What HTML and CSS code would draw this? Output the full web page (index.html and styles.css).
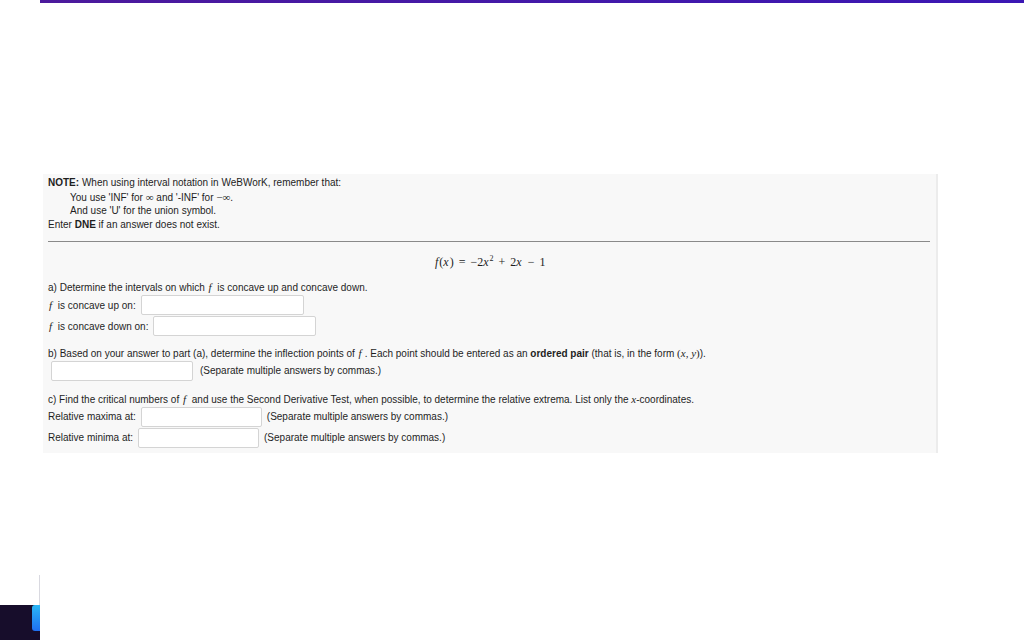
FILE: index.html
```html
<!DOCTYPE html>
<html>
<head>
<meta charset="utf-8">
<link rel="stylesheet" href="styles.css">
</head>
<body>
<div class="topbar"></div>
<div class="panel">
  <div class="note">
    <div class="line"><b>NOTE:</b> When using interval notation in WeBWorK, remember that:</div>
    <div class="line indent">You use 'INF' for <span class="m">∞</span> and '-INF' for <span class="m">−∞</span>.</div>
    <div class="line indent">And use 'U' for the union symbol.</div>
    <div class="line">Enter <b>DNE</b> if an answer does not exist.</div>
  </div>
  <hr class="rule">
  <div class="formula"><span class="mi">f</span>(<span class="mi">x</span>)<span class="op">=</span>−2<span class="mi">x</span><sup>2</sup><span class="op">+</span>2<span class="mi">x</span><span class="op">−</span>1</div>

  <div class="section sec-a">
    <div class="line">a) Determine the intervals on which <span class="mi sp">f</span> is concave up and concave down.</div>
    <div class="row"><span><span class="mi sp">f</span> is concave up on:</span><span class="box w162"></span></div>
    <div class="row"><span><span class="mi sp">f</span> is concave down on:</span><span class="box w162"></span></div>
  </div>

  <div class="section sec-b">
    <div class="line">b) Based on your answer to part (a), determine the inflection points of <span class="mi sp">f</span>. Each point should be entered as an <b>ordered pair</b> (that is, in the form <span class="m">(<span class="mi">x</span>, <span class="mi">y</span>)</span>).</div>
    <div class="row"><span class="box w141 first"></span><span>(Separate multiple answers by commas.)</span></div>
  </div>

  <div class="section sec-c">
    <div class="line">c) Find the critical numbers of <span class="mi sp">f</span> and use the Second Derivative Test, when possible, to determine the relative extrema. List only the <span class="mi">x</span>-coordinates.</div>
    <div class="row"><span>Relative maxima at:</span><span class="box w120"></span><span>(Separate multiple answers by commas.)</span></div>
    <div class="row"><span>Relative minima at:</span><span class="box w120"></span><span>(Separate multiple answers by commas.)</span></div>
  </div>
</div>
<div class="dock">
  <div class="dock-icon"></div>
</div>
</body>
</html>
```

FILE: styles.css
```css
html, body {
  margin: 0;
  padding: 0;
  background: #ffffff;
}
body {
  width: 1024px;
  height: 640px;
  overflow: hidden;
  position: relative;
  font-family: "Liberation Sans", Arial, Helvetica, sans-serif;
  font-size: 10px;
  color: #1e1e1e;
}
.topbar {
  margin-left: 40px;
  height: 3px;
  background: linear-gradient(90deg, #4c1a9c, #3b17b4);
}
.panel {
  margin: 171px 0 0 43px;
  width: 888px;
  height: 277px;
  padding: 2px 0 0 5px;
  background: #f8f8f8;
  border-right: 2px solid #ececec;
}
.line {
  height: 14px;
  line-height: 14px;
  white-space: nowrap;
}
.indent {
  padding-left: 22px;
}
.m, .formula {
  font-family: "Liberation Serif", "Times New Roman", serif;
}
.m {
  font-size: 11px;
}
.mi {
  font-family: "Liberation Serif", "Times New Roman", serif;
  font-style: italic;
  font-size: 11px;
}
.sp {
  padding: 0 1px 0 1px;
  margin-right: 2px;
}
.rule {
  margin: 9px 0 0 0;
  width: 882px;
  border: 0;
  border-top: 1px solid #8a8a8a;
  height: 0;
}
.formula {
  margin-top: 12px;
  padding-left: 387px;
  font-size: 12px;
  height: 16px;
  line-height: 16px;
  white-space: nowrap;
}
.formula .mi {
  font-size: 12px;
  padding-right: 1px;
}
.formula .op {
  padding: 0 5px;
}
.formula sup {
  font-size: 8px;
  vertical-align: 5px;
  line-height: 0;
}
.sec-a {
  margin-top: 10px;
}
.sec-b {
  margin-top: 10px;
}
.sec-c {
  margin-top: 11px;
}
.row {
  display: flex;
  align-items: center;
  gap: 5px;
  height: 21px;
  white-space: nowrap;
}
.box {
  display: inline-block;
  height: 20px;
  background: #ffffff;
  border: 1px solid #d4d4d4;
  border-radius: 2px;
  box-sizing: border-box;
}
.w162 { width: 163px; }
.w141 { width: 142px; }
.w120 { width: 121px; }
.first { margin-left: 3px; margin-right: 2px; }
.dock {
  position: absolute;
  left: 0;
  top: 605px;
  width: 40px;
  height: 35px;
  background: #170d2b;
}
.dock::before {
  content: "";
  position: absolute;
  right: 0;
  top: -30px;
  width: 1px;
  height: 30px;
  background: #d9d9e0;
}
.dock-icon {
  position: absolute;
  left: 32px;
  top: 0;
  width: 8px;
  height: 26px;
  border-radius: 3px 0 0 3px;
  background: linear-gradient(180deg, #2bb8f5, #1f6ff0);
}
```
